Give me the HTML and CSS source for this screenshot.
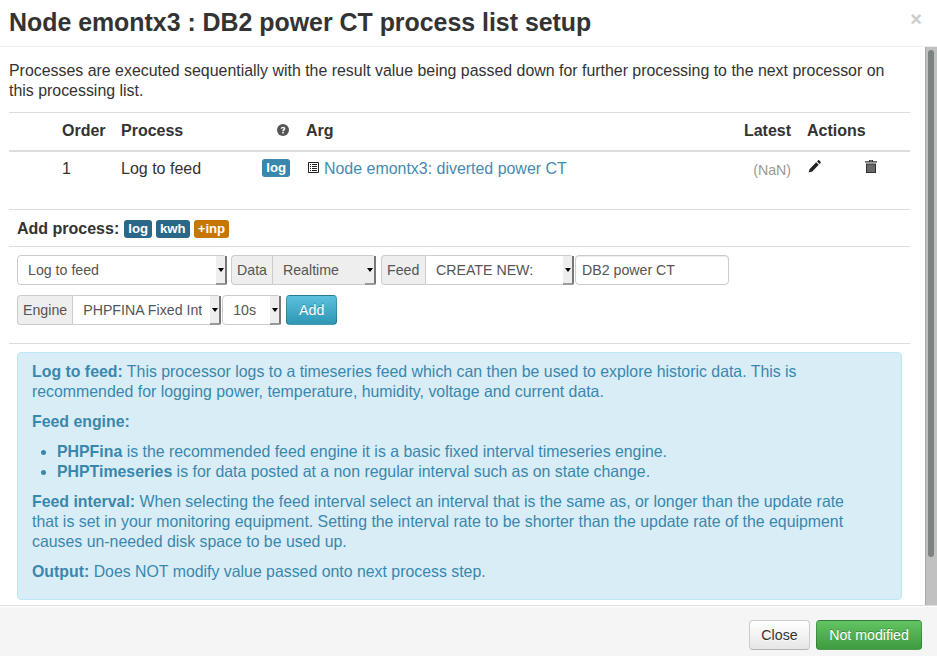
FILE: index.html
```html
<!DOCTYPE html>
<html lang="en">
<head>
<meta charset="utf-8">
<title>Process list setup</title>
<link rel="stylesheet" href="styles.css">
</head>
<body>
<div class="modal">
  <header class="modal-header">
    <h3>Node emontx3 : DB2 power CT process list setup</h3>
    <span class="close-x">×</span>
  </header>
  <div class="modal-middle">
    <main class="modal-body">
      <p class="intro">Processes are executed sequentially with the result value being passed down for further processing to the next processor on this processing list.</p>
      <div class="row row-head">
        <span class="c-order">Order</span>
        <span class="c-process">Process</span>
        <span class="c-help"><svg class="help-icon" viewBox="0 0 14 14"><circle cx="7" cy="7" r="7" fill="#555"/><path d="M4.4 5.5C4.5 4 5.7 3.2 7 3.2c1.6 0 2.7.9 2.700 2.200 0 1.800-1.800 1.700-1.800 3.200H6.100c0-2.200 1.700-2.200 1.700-3.100 0-.5-.3-.8-.8-.8-.6 0-.9.4-1 .9z" fill="#fff"/><rect x="6.100" y="9.300" width="1.800" height="1.800" fill="#fff"/></svg></span>
        <span class="c-arg">Arg</span>
        <span class="c-latest">Latest</span>
        <span class="c-actions">Actions</span>
      </div>
      <div class="row row-item">
        <span class="c-order">1</span>
        <span class="c-process">Log to feed</span>
        <span class="c-help"><span class="label label-info">log</span></span>
        <span class="c-arg"><svg class="list-icon" viewBox="0 0 11 11"><path d="M.5.5h10v10H.5z" fill="#fff" stroke="#222"/><path d="M2 2h1v1H2zM4 2h5v1H4zM2 4h1v1H2zM4 4h5v1H4zM2 6h1v1H2zM4 6h5v1H4zM2 8h1v1H2zM4 8h5v1H4z" fill="#222"/></svg><a class="feed-link">Node emontx3: diverted power CT</a></span>
        <span class="c-latest nan">(NaN)</span>
        <span class="c-actions action-icons">
          <svg class="pencil" viewBox="0 0 13 13"><path d="M10 .4c.4-.4 1-.4 1.300 0l1.300 1.300c.4.4.3.9 0 1.300l-1 1-2.600-2.600zM8.200 2.200l2.600 2.600-6.600 6.600-3.600 1.200 1.100-3.700z" fill="#222"/></svg>
          <svg class="trash" viewBox="0 0 12 13"><path d="M4 0h4v1.200h4v1.300H0V1.200h4zM5 .7v.5h2V.7zM1 3.500h10V13H1z" fill="#333" fill-rule="evenodd"/><path d="M3 4.500v7.500M5 4.500v7.500M7 4.500v7.500M9 4.500v7.500" stroke="#bbb" stroke-width=".8"/></svg>
        </span>
      </div>
      <div class="add-head">
        <b class="add-title">Add process:</b>
        <span class="label label-dark">log</span>
        <span class="label label-dark">kwh</span>
        <span class="label label-orange">+inp</span>
      </div>
      <div class="form-area">
        <div class="controls">
          <div class="select w-process gap-after-small"><span class="sel-text">Log to feed</span><i class="arrow"></i></div>
          <div class="group gap-after">
            <span class="addon">Data</span>
            <div class="select joined grey w-data"><span class="sel-text">Realtime</span><i class="arrow"></i></div>
          </div>
          <div class="group gap-after-tiny">
            <span class="addon addon-feed">Feed</span>
            <div class="select joined w-feed"><span class="sel-text">CREATE NEW:</span><i class="arrow"></i></div>
          </div>
          <div class="text-input">DB2 power CT</div>
        </div>
        <div class="controls">
          <div class="group gap-after-tiny">
            <span class="addon">Engine</span>
            <div class="select joined w-engine"><span class="sel-text">PHPFINA Fixed Int</span><i class="arrow"></i></div>
          </div>
          <div class="select w-interval gap-after"><span class="sel-text">10s</span><i class="arrow"></i></div>
          <button class="btn btn-add">Add</button>
        </div>
      </div>
      <div class="alert">
        <p><b>Log to feed:</b> This processor logs to a timeseries feed which can then be used to explore historic data. This is recommended for logging power, temperature, humidity, voltage and current data.</p>
        <p><b>Feed engine:</b></p>
        <ul>
          <li><b>PHPFina</b> is the recommended feed engine it is a basic fixed interval timeseries engine.</li>
          <li><b>PHPTimeseries</b> is for data posted at a non regular interval such as on state change.</li>
        </ul>
        <p><b>Feed interval:</b> When selecting the feed interval select an interval that is the same as, or longer than the update rate that is set in your monitoring equipment. Setting the interval rate to be shorter than the update rate of the equipment causes un-needed disk space to be used up.</p>
        <p><b>Output:</b> Does NOT modify value passed onto next process step.</p>
      </div>
    </main>
    <div class="scrollbar"><div class="thumb"></div></div>
  </div>
  <footer class="modal-footer">
    <button class="btn btn-close">Close</button>
    <button class="btn btn-save">Not modified</button>
  </footer>
</div>
</body>
</html>
```
FILE: styles.css
```css
* { box-sizing: border-box; }
html, body { margin: 0; height: 100%; }
body { font-family: "Liberation Sans", Arial, sans-serif; font-size: 16px; line-height: 20px; color: #333; background: #fff; overflow: hidden; }
.modal { width: 937px; height: 656px; display: flex; flex-direction: column; background: #fff; }
.modal-header { height: 47px; flex: none; display: flex; justify-content: space-between; border-bottom: 1px solid #eee; padding: 7px 15px 0 9px; }
.modal-header h3 { margin: 0; font-size: 24.9px; line-height: 30px; font-weight: bold; color: #333; }
.close-x { font-size: 20px; font-weight: bold; line-height: 22px; color: #ccc; margin-top: 1px; }
.modal-middle { flex: 1; display: flex; min-height: 0; }
.modal-body { width: 925px; flex: none; padding: 14px 15px 0 9px; overflow: hidden; }
.intro { margin: 0 0 11px; font-size: 15.91px; }
.scrollbar { flex: 1; background: #c1c1c1; padding: 3px 3px 0; box-shadow: inset 1px 0 #a9a9a9; }
.thumb { height: 507px; background: #7d8283; border-radius: 3px; }
.row { display: flex; align-items: flex-start; }
.row-head { height: 40px; border-top: 1px solid #ddd; border-bottom: 2px solid #ddd; font-weight: bold; padding-top: 8px; }
.row-item { height: 58px; border-bottom: 1px solid #ddd; padding-top: 7px; }
.c-order { width: 112px; padding-left: 53px; flex: none; }
.c-process { width: 130px; flex: none; }
.c-help { width: 55px; flex: none; display: flex; justify-content: flex-end; padding-right: 16px; }
.c-arg { flex: 1; display: flex; align-items: center; }
.c-latest { width: 90px; padding-right: 5px; text-align: right; flex: none; }
.c-actions { width: 114px; padding-left: 11px; flex: none; }
.help-icon { width: 12px; height: 12px; margin: 3px 1px 0 0; display: block; }
.list-icon { width: 11px; height: 11px; margin: -3px 5px 0 2px; flex: none; }
.feed-link { color: #468ab0; font-size: 15.95px; }
.c-latest.nan { color: #999; font-size: 14.2px; padding-top: 1px; }
.action-icons { display: flex; padding-top: 1px; padding-left: 12px; }
.pencil { width: 13px; height: 13px; }
.trash { width: 12px; height: 13px; margin-left: 44px; }
.label { display: inline-block; font-size: 13.2px; font-weight: bold; line-height: 14px; padding: 2px 4px; color: #fff; border-radius: 3px; }
.label-info { background: #3a87ad; }
.label-dark { background: #2b6788; margin-top: 1px; }
.label-orange { background: #c67605; margin-top: 1px; }
.add-head { height: 37px; border-bottom: 1px solid #ddd; padding: 9px 0 0 8px; display: flex; gap: 4px; align-items: flex-start; }
.add-title { margin-right: 1px; }
.form-area { border-bottom: 1px solid #ddd; padding: 8px 0 18px 8px; display: flex; flex-direction: column; gap: 10px; }
.controls { display: flex; height: 30px; font-size: 14.2px; color: #555; }
.group { display: flex; }
.gap-after { margin-right: 5px; }
.gap-after-small { margin-right: 4px; }
.gap-after-tiny { margin-right: 1px; }
.addon { background: #eee; border: 1px solid #ccc; border-right: 0; border-radius: 4px 0 0 4px; padding: 0 5px; line-height: 28px; }
.addon-feed { width: 44px; }
.select { position: relative; background: #fff; border: 1px solid #ccc; border-radius: 4px; padding: 0 18px 0 10px; line-height: 28px; white-space: nowrap; color: #555; }
.select.joined { border-radius: 0 4px 4px 0; }
.select.grey { background: #eee; }
.sel-text { display: block; overflow: hidden; color: #555; }
.arrow { position: absolute; right: -1px; top: 0; bottom: -1px; width: 11px; background: #eee; border-right: 2px solid #777; border-bottom: 2px solid #999; border-radius: 0 0 2px 0; }
.arrow::after { content: ""; position: absolute; left: 2px; top: 12px; border: 3px solid transparent; border-top: 4px solid #000; border-bottom: 0; }
.w-process { width: 210px; }
.w-data { width: 104px; }
.w-feed { width: 149px; }
.w-engine { width: 149px; }
.w-interval { width: 59px; }
.text-input { width: 154px; border: 1px solid #ccc; border-radius: 4px; padding: 0 6px; line-height: 28px; color: #555; box-shadow: inset 0 1px 1px rgba(0,0,0,.075); }
.btn { font-family: inherit; font-size: 14.2px; line-height: 20px; height: 30px; padding: 0; border-radius: 4px; border: 1px solid rgba(0,0,0,.2); cursor: pointer; }
.btn-add { width: 51px; color: #fff; background: linear-gradient(#5bc0de, #2f96b4); text-shadow: 0 -1px 0 rgba(0,0,0,.25); }
.alert { margin: 8px 8px 0; height: 248px; background: #d9edf7; border: 1px solid #bce8f1; border-radius: 4px; padding: 9px 14px; color: #3a87ad; font-size: 15.87px; }
.alert p { margin: 0 0 10px; max-width: 820px; }
.alert ul { margin: 0 0 10px; padding-left: 25px; }
.modal-footer { height: 51px; flex: none; background: #f5f5f5; border-top: 1px solid #ddd; padding: 14px 15px 0 0; display: flex; justify-content: flex-end; gap: 6px; box-shadow: inset 0 1px 0 #fff; }
.btn-close { width: 61px; color: #333; background: linear-gradient(#fff, #e6e6e6); border-color: #ccc; border-bottom-color: #b3b3b3; text-shadow: 0 1px 1px rgba(255,255,255,.75); }
.btn-save { width: 106px; color: #fff; background: linear-gradient(#62c462, #3f9b3f); text-shadow: 0 -1px 0 rgba(0,0,0,.25); }
```
